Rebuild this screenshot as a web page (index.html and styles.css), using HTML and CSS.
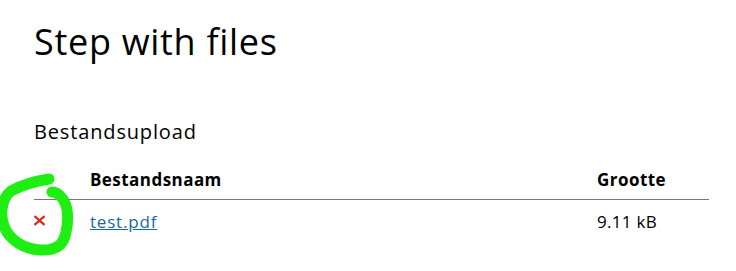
FILE: index.html
```html
<!DOCTYPE html>
<html lang="nl">
<head>
<meta charset="utf-8">
<title>Step with files</title>
<link rel="stylesheet" href="styles.css">
</head>
<body>
<main class="page">
  <h1 class="title">Step with files</h1>
  <h2 class="subtitle">Bestandsupload</h2>
  <table class="files">
    <thead>
      <tr>
        <th class="col-icon"></th>
        <th class="col-name">Bestandsnaam</th>
        <th class="col-size">Grootte</th>
      </tr>
    </thead>
    <tbody>
      <tr>
        <td class="col-icon"><svg class="remove" width="13" height="11" viewBox="0 0 13 11" aria-label="Verwijderen"><path d="M1.5 1.2 L11.5 9.8 M11.5 1.2 L1.5 9.8" stroke="#d7281e" stroke-width="2.2" stroke-linecap="butt" fill="none"/></svg></td>
        <td class="col-name"><a class="file-link" href="#">test.pdf</a></td>
        <td class="col-size size-value">9.11 kB</td>
      </tr>
    </tbody>
  </table>
</main>
<svg class="scribble" width="80" height="95" viewBox="0 0 80 95" aria-hidden="true">
  <path d="M49 14 C36 16 22 20 11 26 C1 34 0 50 4 61 C9 75 24 84 40 85 C57 86 64 79 66 67 C69 54 68 40 62 33 C59 29 55 27 52 27" fill="none" stroke="#1fee12" stroke-width="11" stroke-linecap="round" stroke-linejoin="round"/>
</svg>
</body>
</html>
```

FILE: styles.css
```css
html, body {
  margin: 0;
  padding: 0;
  background: #ffffff;
}
body {
  font-family: "Open Sans", "Noto Sans", sans-serif;
  color: #000000;
  position: relative;
  width: 736px;
  height: 271px;
  overflow: hidden;
}
.page {
  padding: 17px 27px 0 34px;
}
.title {
  margin: 0;
  font-size: 36px;
  font-weight: 400;
  line-height: 50px;
  letter-spacing: 0.7px;
}
.subtitle {
  margin: 51px 0 0 0;
  font-size: 20px;
  font-weight: 400;
  line-height: 28px;
  letter-spacing: 0.85px;
}
.files {
  margin-top: 23px;
  width: 675px;
  border-collapse: collapse;
  font-size: 17px;
}
.files th {
  text-align: left;
  font-weight: 700;
  padding: 0 0 8px 0;
  line-height: 22px;
  border-bottom: 1px solid #777777;
  letter-spacing: 0.45px;
}
.files td {
  padding: 8px 0 0 0;
  line-height: 28px;
  letter-spacing: 0.3px;
}
.col-icon {
  width: 56px;
}
.col-size {
  width: 112px;
}
.size-value {
  letter-spacing: 0;
}
.remove {
  display: inline-block;
  margin-left: -1px;
  vertical-align: 2px;
}
.file-link {
  color: #1a68a0;
  text-decoration: underline;
  letter-spacing: 0.8px;
}
.scribble {
  position: absolute;
  left: 0;
  top: 165px;
}
```
